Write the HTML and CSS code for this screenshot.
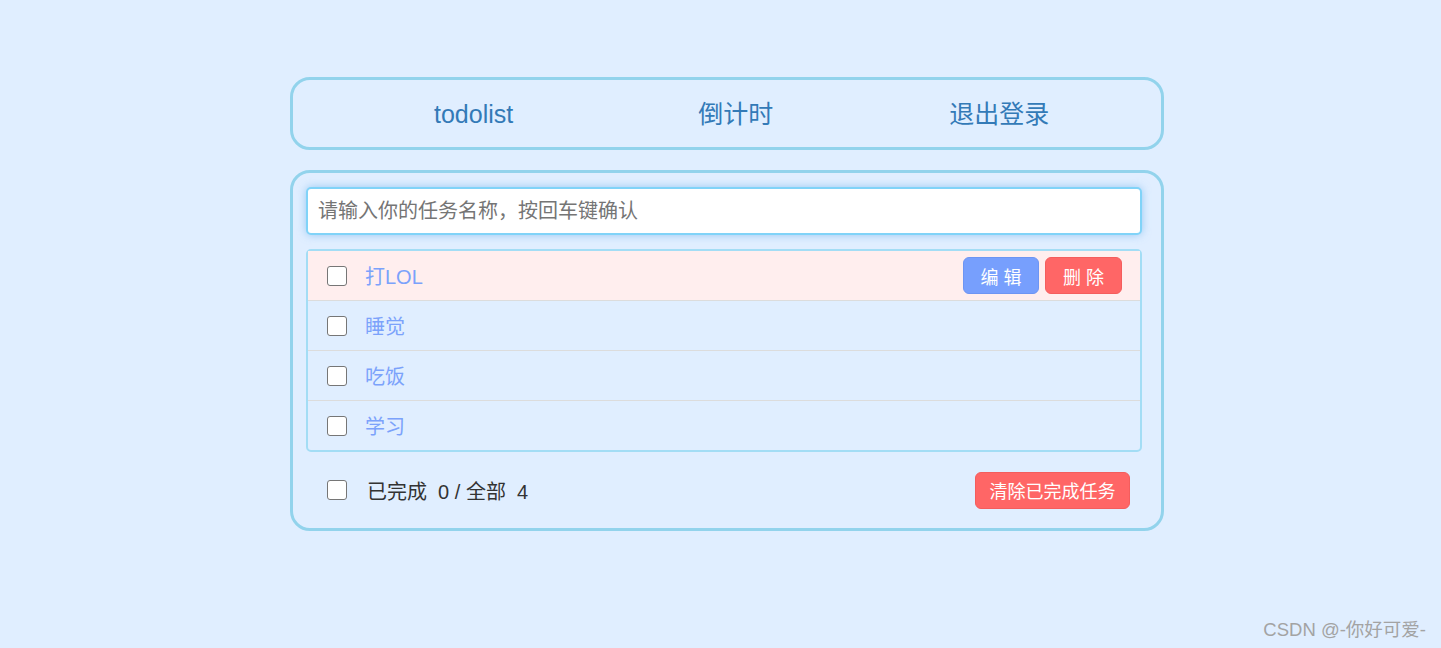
FILE: index.html
```html
<!DOCTYPE html>
<html lang="zh-CN">
<head>
    <meta charset="UTF-8">
    <meta name="viewport" content="width=device-width, initial-scale=1.0">
    <title>todolist</title>
    <link rel="stylesheet" href="styles.css">
</head>
<body>
    <div class="app">
        <nav class="nav">
            <a class="nav-link first" href="#">todolist</a>
            <a class="nav-link second" href="#">倒计时</a>
            <a class="nav-link" href="#">退出登录</a>
        </nav>

        <div class="todo-box">
            <input class="todo-input" type="text" placeholder="请输入你的任务名称，按回车键确认">

            <ul class="todo-list">
                <li class="todo-item active">
                    <span class="check"></span>
                    <span class="todo-name">打LOL</span>
                    <div class="todo-actions">
                        <button class="btn btn-edit">编 辑</button>
                        <button class="btn btn-danger">删 除</button>
                    </div>
                </li>
                <li class="todo-item">
                    <span class="check"></span>
                    <span class="todo-name">睡觉</span>
                </li>
                <li class="todo-item">
                    <span class="check"></span>
                    <span class="todo-name">吃饭</span>
                </li>
                <li class="todo-item">
                    <span class="check"></span>
                    <span class="todo-name">学习</span>
                </li>
            </ul>

            <div class="todo-footer">
                <span class="check"></span>
                <span class="todo-count">已完成&nbsp;&nbsp;0 / 全部&nbsp;&nbsp;4</span>
                <button class="btn btn-danger btn-clear">清除已完成任务</button>
            </div>
        </div>
    </div>

    <div class="watermark">CSDN @-你好可爱-</div>
</body>
</html>
```

FILE: styles.css
```css
body {
    margin: 0;
    height: 648px;
    background-color: #e0eeff;
    font-family: "Liberation Sans", "Noto Sans CJK SC", sans-serif;
    overflow: hidden;
    position: relative;
}
.app {
    width: 874px;
    margin-left: 290px;
    padding-top: 77px;
}
.nav {
    box-sizing: border-box;
    height: 73px;
    border: 3px solid #92d3ec;
    border-radius: 20px;
    display: flex;
    align-items: center;
    padding-left: 141px;
}
.nav-link {
    font-size: 25px;
    color: #337ab7;
    text-decoration: none;
    line-height: 30px;
}
.nav-link.first {
    margin-right: 185px;
}
.nav-link.second {
    margin-right: 176px;
}
.todo-box {
    box-sizing: border-box;
    height: 361px;
    margin-top: 20px;
    border: 3px solid #92d3ec;
    border-radius: 20px;
    padding: 14px 19px 0 13px;
}
.todo-input {
    display: block;
    box-sizing: border-box;
    width: 100%;
    height: 48px;
    border: 2px solid #80d3f8;
    border-radius: 5px;
    box-shadow: 0 0 8px rgba(102, 175, 233, 0.6);
    padding: 0 10px;
    font-family: inherit;
    font-size: 20px;
    outline: none;
}
.todo-input::placeholder {
    color: #757575;
}
.todo-list {
    list-style: none;
    margin: 14px 0 0;
    padding: 0;
    border: 2px solid #a3ddf5;
    border-radius: 5px;
}
.todo-item {
    box-sizing: border-box;
    display: flex;
    align-items: center;
    height: 50px;
    padding: 0 0 0 19px;
    border-top: 1px solid #dcdcdc;
}
.todo-item:first-child {
    border-top: none;
    height: 49px;
}
.todo-item.active {
    background-color: #ffeeee;
}
.check {
    box-sizing: border-box;
    width: 20px;
    height: 20px;
    border: 1.5px solid #767676;
    border-radius: 3px;
    background-color: #fff;
    flex-shrink: 0;
}
.todo-name {
    margin-left: 18px;
    font-size: 20px;
    color: #7ba2fb;
}
.todo-actions {
    margin-left: auto;
    display: flex;
    gap: 6px;
    padding-right: 18px;
}
.btn {
    height: 37px;
    border: 1px solid transparent;
    border-radius: 6px;
    color: #fff;
    font-family: inherit;
    font-size: 18px;
    padding: 0 14px;
    cursor: pointer;
}
.btn-edit {
    width: 76px;
    background-color: #779ffd;
    border-color: #6d95f3;
}
.btn-danger {
    width: 77px;
    background-color: #ff6666;
    border-color: #f45d5d;
}
.todo-footer {
    display: flex;
    align-items: center;
    height: 76px;
    padding-left: 21px;
    padding-right: 12px;
}
.todo-count {
    margin-left: 20px;
    font-size: 20px;
    color: #333;
}
.btn-clear {
    width: 155px;
    margin-left: auto;
    padding: 0;
    font-size: 18px;
}
.watermark {
    position: absolute;
    right: 15px;
    bottom: 7px;
    font-size: 18.5px;
    color: #a3a3a3;
}
```
